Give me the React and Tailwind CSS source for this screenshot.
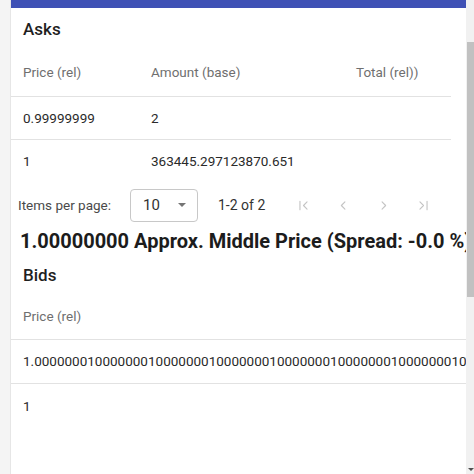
import React from 'react'

const ASKS = [
  { price: '0.99999999', amount: '2', total: '' },
  { price: '1', amount: '363445.297123870.651', total: '' },
]

const BIDS = [
  '1.00000001000000010000000100000001000000010000000100000001000000010000000100000001',
  '1',
]

function PagerIcon({ kind }) {
  const paths = {
    first: 'M7 6v12 M17 7l-5 5 5 5',
    prev: 'M14 7l-5 5 5 5',
    next: 'M10 7l5 5-5 5',
    last: 'M17 6v12 M7 7l5 5-5 5',
  }
  return (
    <svg width="17" height="17" viewBox="0 0 24 24" fill="none" stroke="#c4c4c4" strokeWidth="1.6" strokeLinecap="round" strokeLinejoin="round">
      <path d={paths[kind]} />
    </svg>
  )
}

function Paginator() {
  return (
    <div className="h-[44px] flex items-center text-[13.5px] text-[#4a4a4a]">
      <span className="ml-[7px] w-[112px]">Items per page:</span>
      <div className="w-[68px] h-[33px] border border-[#c8c8c8] rounded-[4px] flex items-center pl-[12px]">
        <span className="text-[15px] text-[#333]">10</span>
        <span className="ml-[18px] w-0 h-0 border-l-[4px] border-r-[4px] border-t-[4px] border-l-transparent border-r-transparent border-t-[#757575]" />
      </div>
      <span className="ml-[20px] text-[14px] text-[#333]">1-2 of 2</span>
      <div className="ml-[30px] flex items-center gap-[23px]">
        <PagerIcon kind="first" />
        <PagerIcon kind="prev" />
        <PagerIcon kind="next" />
        <PagerIcon kind="last" />
      </div>
    </div>
  )
}

export default function App() {
  return (
    <div className="w-[474px] h-[474px] flex bg-[#f4f4f4] overflow-hidden" style={{ fontFamily: 'Roboto, "Noto Sans", sans-serif' }}>
      <div className="w-[10px] shrink-0" />

      <div className="w-[456px] shrink-0 bg-white border-l border-[#e6e6e6] overflow-hidden">
        <div className="h-[8px] bg-[#3f51b5]" />

        {/* Asks */}
        <div className="h-[34px] pt-[11px] pl-[12px] text-[17px] leading-[20px] font-medium text-[#1f1f1f]">Asks</div>
        <div className="w-[440px] text-[13.5px]">
          <div className="h-[55px] flex items-end pb-[14px] border-b border-[#e2e2e2] text-[#6f6f6f] leading-[20px]">
            <span className="w-[140px] pl-[12px]">Price (rel)</span>
            <span className="w-[205px]">Amount (base)</span>
            <span>Total (rel))</span>
          </div>
          {ASKS.map((r, i) => (
            <div
              key={i}
              className={`h-[43px] flex items-center text-[#2a2a2a] ${i === 0 ? 'border-b border-[#e2e2e2]' : ''}`}
            >
              <span className="w-[140px] pl-[12px]">{r.price}</span>
              <span className="w-[205px]">{r.amount}</span>
              <span>{r.total}</span>
            </div>
          ))}
        </div>
        <Paginator />

        <div className="h-[28px] pl-[9px] flex items-center text-[20px] font-bold text-[#1c1c1c] whitespace-nowrap">
          1.00000000 Approx. Middle Price (Spread: -0.0 %)
        </div>

        {/* Bids */}
        <div className="h-[35px] pt-[10px] pl-[12px] text-[17px] leading-[20px] font-medium text-[#1f1f1f]">Bids</div>
        <div className="text-[13.5px]">
          <div className="h-[50px] flex items-end pb-[13px] border-b border-[#e2e2e2] text-[#6f6f6f] leading-[20px] pl-[12px]">
            Price (rel)
          </div>
          {BIDS.map((b, i) => (
            <div
              key={i}
              className={`h-[44px] flex items-center pl-[12px] text-[#2a2a2a] whitespace-nowrap ${i === 0 ? 'border-b border-[#e2e2e2]' : ''}`}
            >
              {b}
            </div>
          ))}
        </div>
      </div>

      {/* scrollbar */}
      <div className="w-[8px] shrink-0 bg-[#f1f1f1] flex flex-col pl-[1px]">
        <div className="h-[42px]" />
        <div className="h-[255px] bg-[#c1c1c1]" />
        <div className="flex-1" />
        <div className="h-[6px] flex justify-center">
          <span className="w-0 h-0 border-l-[3px] border-r-[3px] border-t-[3px] border-l-transparent border-r-transparent border-t-[#505050]" />
        </div>
      </div>
    </div>
  )
}
